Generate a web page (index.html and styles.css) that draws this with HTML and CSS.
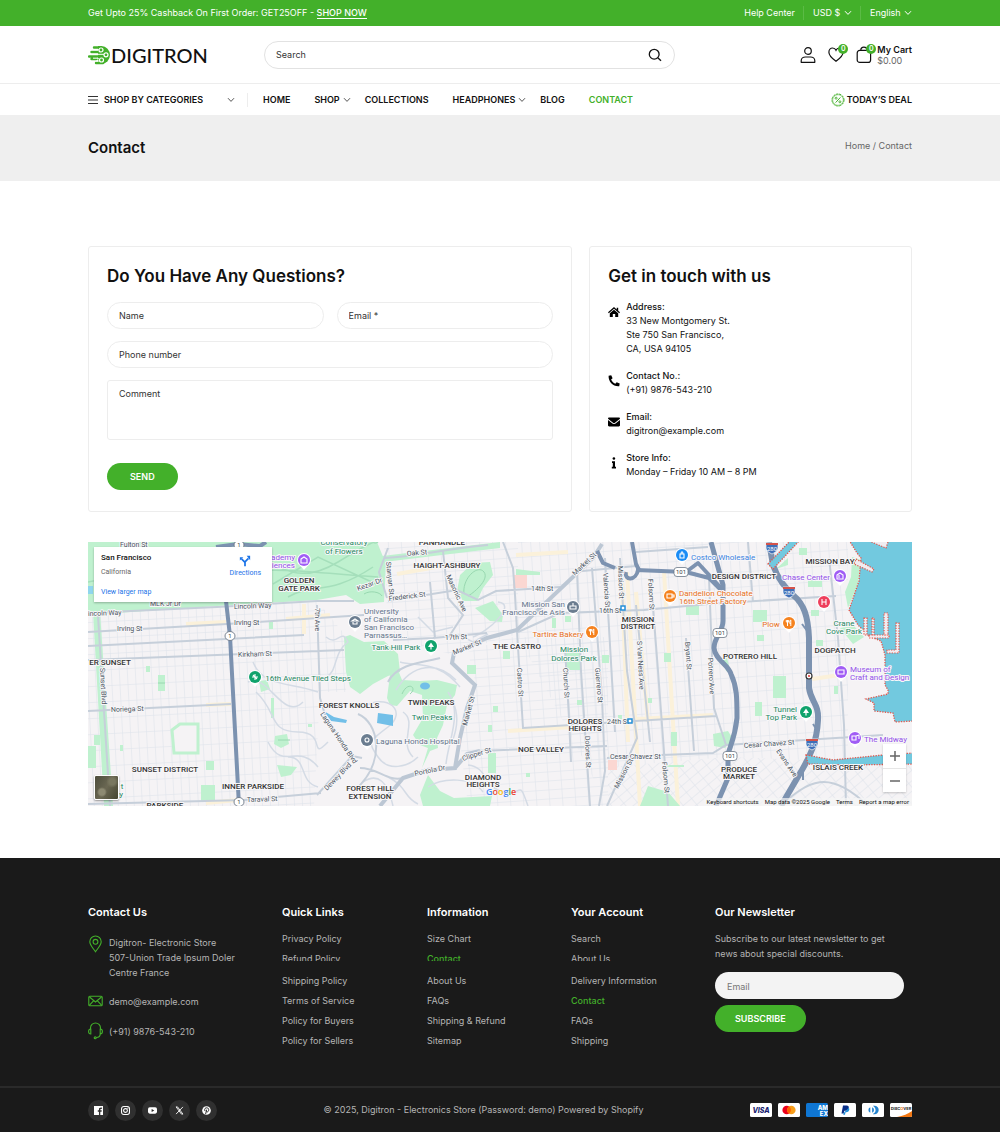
FILE: index.html
```html
<!DOCTYPE html>
<html lang="en">
<head>
<meta charset="utf-8">
<meta name="viewport" content="width=device-width, initial-scale=1">
<title>Contact – Digitron</title>
<link rel="stylesheet" href="styles.css">
</head>
<body>
<svg class="defs" aria-hidden="true">
  <symbol id="chevron" viewBox="0 0 8 6"><path d="M1 1.2 4 4.4 7 1.2" fill="none" stroke="currentColor" stroke-width="1"/></symbol>
</svg>

<div class="topbar">
  <div class="wrap topbar-row">
    <p class="promo">Get Upto 25% Cashback On First Order: GET25OFF - <a href="#shop">SHOP NOW</a></p>
    <div class="topbar-tools">
      <a href="#help">Help Center</a>
      <div class="picker"><select aria-label="Currency"><option>USD $</option></select><svg><use href="#chevron"/></svg></div>
      <div class="picker"><select aria-label="Language"><option>English</option></select><svg><use href="#chevron"/></svg></div>
    </div>
  </div>
</div>

<header class="header">
  <div class="wrap header-row">
    <a class="logo" href="#home" aria-label="Digitron">
      <svg viewBox="0 0 22 20" aria-hidden="true">
        <path d="M10 1h3.500a8.500 9 0 0 1 0 18H10z" fill="#43b02a"/>
        <path d="M6 2.500h7M3.500 7h7M1 11.500h9M3.500 14h5M8 18h7" stroke="#43b02a" stroke-width="2.400" stroke-linecap="round"/>
        <path d="M3 4.800h8M2 9.300h14M5 13.200h5l2 2M8 16h4" stroke="#fff" stroke-width="1" fill="none"/>
        <circle cx="13" cy="5" r="2" fill="#43b02a" stroke="#fff" stroke-width="1.200"/>
        <circle cx="18" cy="9.800" r="2" fill="#43b02a" stroke="#fff" stroke-width="1.200"/>
        <circle cx="13.500" cy="15" r="2" fill="#43b02a" stroke="#fff" stroke-width="1.200"/>
      </svg>
      <span>DIGITRON</span>
    </a>
    <form class="search" role="search">
      <input type="search" placeholder="Search" aria-label="Search">
      <button aria-label="Submit search"><svg viewBox="0 0 14 14"><circle cx="6.200" cy="6.200" r="4.900" fill="none" stroke="#111" stroke-width="1.300"/><path d="m9.800 9.800 3.200 3" stroke="#111" stroke-width="1.400"/></svg></button>
    </form>
    <div class="header-icons">
      <a href="#account" aria-label="Account"><svg viewBox="0 0 16 18"><g fill="none" stroke="#111" stroke-width="1.200"><circle cx="8" cy="5" r="3.300"/><path d="M1.200 16.300v-1.500c0-2.300 2-3.800 4.200-3.800h5.200c2.200 0 4.200 1.500 4.200 3.800v1.500z" stroke-linejoin="round"/></g></svg></a>
      <a href="#wishlist" aria-label="Wishlist"><svg viewBox="0 0 16 18"><path d="M8 15.200C4.500 12.700.9 9.500.9 6.200.9 3.800 2.600 2 4.600 2 6.200 2 7.400 2.900 8 4.300 8.600 2.900 9.800 2 11.400 2c2 0 3.700 1.800 3.700 4.200 0 3.300-3.600 6.500-7.100 9z" fill="none" stroke="#111" stroke-width="1.200"/></svg><span class="badge">0</span></a>
      <a class="cart" href="#cart"><svg viewBox="0 0 16 18"><g fill="none" stroke="#111" stroke-width="1.200"><rect x="1.200" y="4.400" width="13.400" height="12" rx="2.500"/><path d="M4.800 4.200C4.800 0 11 0 11 4.200"/></g></svg><span class="badge">0</span><span class="cart-text"><strong>My Cart</strong><small>$0.00</small></span></a>
    </div>
  </div>
</header>

<nav class="nav" aria-label="Main">
  <div class="wrap nav-row">
    <button class="categories"><svg class="burger" viewBox="0 0 10 8"><path d="M0 .5h10M0 4h10M0 7.500h10" stroke="#333" stroke-width="1"/></svg><span>SHOP BY CATEGORIES</span><svg class="chev"><use href="#chevron"/></svg></button>
    <ul class="menu">
      <li><a href="#home">HOME</a></li>
      <li><a href="#shop">SHOP <svg class="chev"><use href="#chevron"/></svg></a></li>
      <li><a href="#collections">COLLECTIONS</a></li>
      <li><a href="#headphones">HEADPHONES <svg class="chev"><use href="#chevron"/></svg></a></li>
      <li><a href="#blog">BLOG</a></li>
      <li><a class="active" href="#contact" aria-current="page">CONTACT</a></li>
    </ul>
    <a class="deal" href="#deal"><svg viewBox="0 0 14 14"><circle cx="7" cy="7" r="6" fill="none" stroke="#43b02a" stroke-width="1" stroke-dasharray="2.400 .74"/><circle cx="7" cy="7" r="5.300" fill="none" stroke="#43b02a" stroke-width=".5"/><path d="m4.600 9.600 4.800-5.200" stroke="#43b02a"/><g fill="none" stroke="#43b02a" stroke-width=".9"><circle cx="5.100" cy="5.200" r="1"/><circle cx="8.900" cy="8.800" r="1"/></g></svg>TODAY’S DEAL</a>
  </div>
</nav>

<main>
  <section class="banner">
    <div class="wrap banner-row">
      <h1>Contact</h1>
      <p class="crumbs"><a href="#home">Home</a> / Contact</p>
    </div>
  </section>

  <div class="wrap panels">
    <section class="card">
      <h2>Do You Have Any Questions?</h2>
      <form class="contact-form">
        <input class="field" type="text" placeholder="Name" aria-label="Name">
        <input class="field" type="email" placeholder="Email *" aria-label="Email">
        <input class="field wide" type="tel" placeholder="Phone number" aria-label="Phone number">
        <textarea class="field wide" placeholder="Comment" aria-label="Comment"></textarea>
        <button class="button send">SEND</button>
      </form>
    </section>
    <section class="card">
      <h2>Get in touch with us</h2>
      <ul class="details">
        <li><svg viewBox="0 0 12 12"><path d="M6 1 0 6.300l.8.900L6 2.700l5.200 4.500.8-.9-1.800-1.600V1.800H8.700v1.600z"/><path d="M6 3.700 1.800 7.300V11h3V8h2.400v3h3V7.300z"/></svg><div><h3>Address:</h3><p>33 New Montgomery St.<br>Ste 750 San Francisco,<br>CA, USA 94105</p></div></li>
        <li><svg viewBox="0 0 12 12"><path d="M.6.800 3.200.2l1.400 3-1.500 1.300c.8 1.800 2.200 3.300 4.200 4.300l1.400-1.600 3 1.300-.5 2.700C5.300 11.800.3 7 .6.800z"/></svg><div><h3>Contact No.:</h3><p>(+91) 9876-543-210</p></div></li>
        <li><svg viewBox="0 0 12 12"><path d="M1.200 1.600h9.600c.7 0 1.200.5 1.200 1.100L6.700 6.900a1.100 1.100 0 0 1-1.400 0L0 2.700c0-.6.500-1.100 1.200-1.100z"/><path d="M0 4v5.200c0 .7.500 1.200 1.200 1.200h9.600c.7 0 1.200-.5 1.200-1.200V4L7.200 7.700c-.7.500-1.700.5-2.400 0z"/></svg><div><h3>Email:</h3><p>digitron@example.com</p></div></li>
        <li><svg viewBox="0 0 12 12"><circle cx="5.900" cy="1.500" r="1.300"/><path d="M4 4.200h3v5.500h1V11.500H3.800V9.700h1V6H4z"/></svg><div><h3>Store Info:</h3><p>Monday – Friday 10 AM – 8 PM</p></div></li>
      </ul>
    </section>
  </div>

  <div class="wrap">
    <section class="map" aria-label="Map of San Francisco">
      <svg class="map-canvas" viewBox="0 0 824 264" preserveAspectRatio="xMidYMid slice">
        <defs>
          <pattern id="gridWest" width="8" height="16" patternUnits="userSpaceOnUse" patternTransform="rotate(-3)"><path d="M0 0V16M0 0H8" stroke="#dbe1ea" stroke-width="1"/></pattern>
          <pattern id="gridMid" width="13" height="9" patternUnits="userSpaceOnUse" patternTransform="rotate(-4)"><path d="M0 0V9M0 0H13" stroke="#dbe1ea" stroke-width="1"/></pattern>
          <pattern id="gridEast" width="9" height="15" patternUnits="userSpaceOnUse" patternTransform="rotate(-4)"><path d="M0 0V15M0 0H9" stroke="#dbe1ea" stroke-width="1"/></pattern>
          <pattern id="gridSouth" width="11" height="8" patternUnits="userSpaceOnUse" patternTransform="rotate(-40)"><path d="M0 0V8M0 0H11" stroke="#dbe1ea" stroke-width="1"/></pattern>
          <g id="pin"><path d="M-4 5.500 0 10l4-4.500z" fill="#fff"/><circle r="7" fill="#fff"/><circle r="6" fill="currentColor"/></g>
          <g id="tree"><path d="M0-3.500 3 1H.6V3.500H-.6V1H-3z" fill="#fff"/></g>
          <g id="fork"><path d="M-1.500-3V3M-2.700-3v2h2.400v-2M1.800 3V-3C.8-2.500.6-1 .8.500h1" fill="none" stroke="#fff"/></g>
          <g id="us"><rect x="-7" y="-4.500" width="14" height="9" rx="3" fill="#fff" stroke="#6b7786" stroke-width=".8"/><text class="shield" y="2">101</text></g>
          <g id="ca"><ellipse rx="5" ry="4.500" fill="#fff" stroke="#6b7786" stroke-width=".9"/><text class="shield" y="2">1</text></g>
          <g id="interstate"><path d="M-6-5H6V0C6 3 2 5 0 6-2 5-6 3-6 0z" fill="#3f6fb8" stroke="#fff" stroke-width=".7"/><path d="M-6-5H6v2H-6z" fill="#d4534b"/><text class="shield light" y="2.500">280</text></g>
        </defs>

        <rect width="824" height="264" fill="#f5f3f5"/>
        <path d="M0 70 230 60 258 94V150H232L226 264H0z" fill="url(#gridWest)"/>
        <path d="M296 0H430V92L362 112 300 96zM380 110 420 95H520V264H380L372 200 388 143z" fill="url(#gridMid)"/>
        <path d="M430 0H760V264H520L428 90z" fill="url(#gridEast)"/>
        <path d="M640 215 824 222V264H635zM520 225 640 215 630 264H520z" fill="#f5f3f5"/>
        <path d="M640 215 824 222V264H635zM520 225 640 215 630 264H520z" fill="url(#gridSouth)"/>

        <!-- shopping streets -->
        <path d="M98 82 138 80M198 77 242 73M216 62V92M118 163 143 162M309 32 354 24M420 189 500 184M548 177 625 173M428 13 480 10M539 30 552 264M548 50 560 180M534 40 540 200M724 137 752 133M118 261 150 258M576 30 590 264" stroke="#fbf1da" stroke-width="4" fill="none"/>

        <!-- parks -->
        <g fill="#bff1cf">
          <path d="M0 0H289L298 22 296 60 272 62 258 53 229 58 129 64 0 73z"/>
          <path d="M294 14 412 0V6L296 20zM5 70H12L25 264H16z"/>
          <path d="M256 95 262 93 276 100 296 99 310 112 312 130 300 134 285 142 272 152 262 145 258 130zM302 133 310 128 314 138 332 139 349 138 369 143 367 153 359 163 355 183 349 196 350 206 342 209 334 226 340 206 332 203 325 193 335 176 334 153 322 149 309 164 302 163 299 156z"/>
          <path d="M372 33 385 21 402 20 405 33 395 46 389 59 375 59 369 49zM387 66 405 59 415 73 414 80 402 79zM332 253 340 233 352 249 366 256 404 254 402 264H335z"/>
          <path d="M58 124h4v6h-4zM70 133h7v16h-7zM6 193h6v10H6zM0 204h8v22H0zM32 203h3v6h-3zM118 219h8v9h-8zM113 243h14v16h-14zM187 194l12-2 2 10-8 4-7-4zM189 223l20 2-6 8-10 2zM171 139l8-1 3 9-9 3zM181 79h4v8h-4zM183 156h3v20h-3zM220 182h4v3h-4z"/>
          <path d="M477 106h15v22h-15zM400 211h8v20h-8zM379 123h9v9h-9zM415 109h7v8h-7zM405 164h5v6h-5zM400 183h4v7h-4zM514 113h7v8h-7zM489 158h5v5h-5zM464 76h4v10h-4zM477 74h6v6h-6zM438 231h4v4h-4zM428 27l24 3v3h-24zM530 173h4v4h-4z"/>
          <path d="M665 68h14v12h-14zM685 134h13v22h-13zM598 63h13v10h-13zM669 93h7v6h-7zM635 117l4-1 4 15-5-2zM625 192l15-3 5 8-8 9-11-2zM583 190h6v14h-6zM576 111h7v9h-7zM552 264 560 244 580 250 592 264zM667 160h7v14h-7zM728 98h7v6h-7zM723 68h8v6h-8zM720 38h14v7h-14zM711 6h8v7h-8zM576 223h20v2h-20zM746 144h4v8h-4zM560 156h4v5h-4z"/>
          <path d="M764 15 773 18 770 42 760 66 757 50 763 35zM752 86 766 84 776 95 765 102zM688 27 700 16V23z"/>
        </g>
        <path d="M84 188 92 182H110V211H86z" fill="#f5f3f5" stroke="#bff1cf" stroke-width="3"/>
        <path d="M0 40C40 30 80 55 130 38S210 30 290 35M150 20C190 10 200 50 250 20S280 5 290 0M185 42 230 15 288 42M200 55C225 40 240 55 285 25" stroke="#a5dfbb" stroke-width="1.500" fill="none"/>
        <path d="M376 52C374 36 390 22 396 30S384 52 380 54M314 152C320 138 330 146 322 152M276 52c6-4 16-2 18 2M190 198h12M70 141h7" stroke="#98d8b0" fill="none"/>
        <path d="M425 33h14v13h-14zM520 218h9v10h-9z" fill="#fbd7d2"/>

        <!-- hillside streets -->
        <path d="M160 140C180 130 195 180 215 160M168 150C190 170 180 190 210 190S220 220 240 200M180 200c15 30 30 0 50 25M165 120C175 145 200 140 230 150M200 215c20 0 10 25 30 30M238 95c12 10 15-10 22 5-15 10-10 30-22 35M275 165C300 150 320 170 300 185S280 200 290 215 320 225 330 215M315 170C330 180 310 200 325 215M308 148C325 120 350 120 368 138M312 120C330 125 350 118 372 145M360 150C375 170 360 200 358 222M365 160C372 175 368 190 364 200M340 245C355 235 385 235 395 250M380 223C400 225 395 245 415 250S430 235 440 264M300 235C320 245 315 255 330 262M275 240C290 230 300 240 305 264M330 75 345 90 365 85M410 60C430 62 400 90 385 95M375 95 385 100 400 92" stroke="#d4dbe5" stroke-width="1.500" fill="none"/>

        <!-- main streets -->
        <g fill="none" stroke="#c6cfda" stroke-width="2">
          <path d="M0 71 129 65 229 59 266 59M0 90 139 82 276 73M0 104 216 93M0 118 256 108M0 169 143 162M0 262 156 258 233 251M229 63 232 156 238 176 264 214 229 253M264 214 274 216M10 74 22 264"/>
          <path d="M297 16C330 14 350 8 400 3M300 6 291 30 299 56M355 9 360 56 375 73 362 93M300 59 369 48 390 58 408 49 472 45M305 98 345 96 399 91M415 0 425 26 427 53 429 89 435 186 628 174M342 40 347 96M489 29 493 129 502 264M477 106 481 176 483 220M504 26 514 156 517 229 511 264M517 16 527 190M532 16 539 129 549 196 519 264M548 63 562 200M598 96 606 209M563 39 570 129 580 264M621 36 626 166 638 203M741 16 750 96 756 183 758 264M390 209 519 204M519 216 548 214 625 211 638 203 748 196 795 193"/>
          <path d="M430 90 472 71 556 68 620 62 748 54M484 30 548 24M265 250C300 220 290 180 270 172M272 226C290 226 300 240 315 236M693 263C720 240 740 225 780 264M660 0 665 60M548 10 620 5M300 140C310 120 340 120 352 116"/>
        </g>
        <g fill="none" stroke="#bcc7d4" stroke-width="4">
          <path d="M514 2 505 16 429 88 399 96 366 111 364 121 387 143 379 166 372 196 367 226 339 228 315 236 292 264M367 226 379 212 392 209"/>
        </g>

        <!-- freeways -->
        <g fill="none" stroke="#7c92b0" stroke-linejoin="round">
          <path d="M128 5 150 2 172 4 178 0" stroke-width="4"/>
          <path d="M138 59 142 94 151 264" stroke-width="4"/>
          <path d="M509 9 515 21 527 26M544 0 548 22 552 30M538 30c-2 9 10 9 12-2" stroke-width="4"/>
          <path d="M548 28 598 30 621 36 633 48M598 30 610 21 633 46" stroke-width="4"/>
          <path d="M623 0 635 43V79C635 90 626 95 626 106 627 118 640 122 643 132 649 145 649 156 649 176 647 195 643 202 640 212V236L628 264" stroke-width="5"/>
          <path d="M681 0 685 23C690 38 698 46 705 53 716 62 720 74 721 96V146C723 160 731 162 730 178 729 200 722 215 711 233L693 264" stroke-width="6"/>
          <path d="M714 82l6 8M725 182l4 6M715 228v10" stroke-width="2"/>
        </g>

        <!-- bay -->
        <g fill="#72c9df" stroke="#e2564b" stroke-width="1.300" stroke-dasharray="1.300 1.300">
          <path d="M761-2 769 11 773 16 771 39 761 68 770 83 781 94 793 99 797 113V143L800 148V152L778 157 786 161V169L805 171 807 180 826 179V-2z"/>
          <path d="M718 213 745 218 795 213 826 211V222L761 223 720 222z"/>
          <path d="M680 22 703-2H712L685 27z"/>
        </g>
        <g fill="#f0edf1" stroke="#e2564b" stroke-width="1.200" stroke-dasharray="1.300 1.300">
          <path d="M768 17 786 27 784 30 766 22zM781-1 798 6 800 0M796 71h4v22h-4zM776 76h3v17h-3zM784 76h2v17h-2zM781 93h20v3h-20zM808 81h3v30h-12v-3h9z"/>
        </g>
        <path d="M290 171l15 2v11l-16-3zM236 169 246 175 259 178 258 181 243 179z" fill="#72bfe8"/><ellipse cx="337" cy="144" rx="5" ry="3.500" fill="#72bfe8"/><path d="M0 44h5v8H0z" fill="#8fd6ee"/>

        <!-- road shields -->
        <use href="#ca" x="151" y="3"/><use href="#ca" x="142" y="94"/><use href="#ca" x="151" y="260"/>
        <use href="#us" x="593" y="30"/><use href="#us" x="632" y="91"/><use href="#us" x="642" y="214"/>
        <use href="#interstate" x="684" y="6"/><use href="#interstate" x="701" y="50"/><use href="#interstate" x="724" y="202"/>
        <circle cx="721" cy="134" r="3" fill="#fff" stroke="#333" stroke-width="1.200"/><circle cx="721" cy="134" r="1" fill="#d33"/>

        <!-- street names -->
        <g class="street">
          <text x="32" y="5">Fulton St</text><text x="62" y="64">MLK Jr Dr</text>
          <text x="0" y="74" transform="rotate(-2 0 74)">incoln Way</text><text x="146" y="67" transform="rotate(-2 146 67)">Lincoln Way</text>
          <text x="29" y="89">Irving St</text><text x="146" y="83">Irving St</text><text x="150" y="115" transform="rotate(-2 150 115)">Kirkham St</text>
          <text x="23" y="170" transform="rotate(-2 23 170)">Noriega St</text><text x="159" y="260" transform="rotate(-2 159 260)">Taraval St</text>
          <text transform="translate(12 126) rotate(87)">Sunset Blvd</text><text transform="translate(227 66) rotate(90)">7th Ave</text>
          <text transform="translate(232 172) rotate(56)">Laguna Honda Blvd</text><text transform="translate(239 249) rotate(-46)">Dewey Blvd</text>
          <text transform="translate(270 49) rotate(-20)">Kezar Dr</text><text transform="translate(298 20) rotate(84)">Stanyan St</text>
          <text transform="translate(319 14) rotate(-5)">Oak St</text><text transform="translate(301 59) rotate(-7)">Frederick St</text>
          <text transform="translate(358 34) rotate(65)">Masonic Ave</text><text x="357" y="98" transform="rotate(-3 357 98)">17th St</text>
          <text transform="translate(366 113) rotate(-22)">Market St</text><text transform="translate(379 184) rotate(-75)">Market St</text><text transform="translate(487 34) rotate(-44)">Market St</text>
          <text x="443" y="49">14th St</text><text x="511" y="71">16th St</text>
          <text transform="translate(515 31) rotate(86)">Valencia St</text><text transform="translate(530 24) rotate(88)">Mission St</text>
          <text transform="translate(429 126) rotate(87)">Castro St</text><text transform="translate(475 126) rotate(87)">Church St</text><text transform="translate(507 126) rotate(85)">Guerrero St</text>
          <text transform="translate(497 194) rotate(88)">Dolores St</text><text x="519" y="182">24th St</text><text x="522" y="217">Cesar Chavez St</text>
          <text transform="translate(375 219) rotate(-18)">Clipper St</text><text transform="translate(327 234) rotate(-12)">Portola Dr</text>
          <text transform="translate(530 247) rotate(-62)">Mission St</text><text transform="translate(549 99) rotate(87)">S Van Ness Ave</text>
          <text transform="translate(560 37) rotate(87)">Folsom St</text><text transform="translate(574 220) rotate(85)">Folsom St</text>
          <text transform="translate(597 100) rotate(86)">Bryant St</text><text transform="translate(620 116) rotate(87)">Potrero Ave</text>
          <text x="656" y="206" transform="rotate(-4 656 206)">Cesar Chavez St</text><text transform="translate(688 209) rotate(56)">Evans Ave</text>
        </g>

        <!-- districts -->
        <g class="area">
          <text x="211" y="41">GOLDEN</text><text x="211" y="49">GATE PARK</text><text x="22" y="123">ER SUNSET</text><text x="77" y="230">SUNSET DISTRICT</text><text x="165" y="247">INNER PARKSIDE</text><text x="77" y="266">PARKSIDE</text>
          <text x="261" y="166">FOREST KNOLLS</text><text x="282" y="249">FOREST HILL</text><text x="282" y="257">EXTENSION</text><text x="354" y="3">PANHANDLE</text><text x="359" y="26">HAIGHT-ASHBURY</text>
          <text x="429" y="107">THE CASTRO</text><text x="343" y="163">TWIN PEAKS</text><text x="497" y="182">DOLORES</text><text x="497" y="189">HEIGHTS</text><text x="453" y="210">NOE VALLEY</text><text x="395" y="238">DIAMOND</text><text x="395" y="245">HEIGHTS</text>
          <text x="550" y="80">MISSION</text><text x="550" y="87">DISTRICT</text><text x="656" y="37">DESIGN DISTRICT</text><text x="742" y="22">MISSION BAY</text><text x="747" y="111">DOGPATCH</text><text x="662" y="117">POTRERO HILL</text>
          <text x="651" y="230">PRODUCE</text><text x="651" y="237">MARKET</text><text x="750" y="228">ISLAIS CREEK</text>
        </g>

        <!-- places -->
        <g class="place green"><text x="256" y="3">Conservatory</text><text x="256" y="12">of Flowers</text><text x="34" y="247">t</text><text x="31" y="255">ay</text><text x="220" y="139">16th Avenue Tiled Steps</text><text x="308" y="108">Tank Hill Park</text><text x="344" y="178">Twin Peaks</text><text x="486" y="110">Mission</text><text x="486" y="119">Dolores Park</text><text x="756" y="84">Crane</text><text x="756" y="92">Cove Park</text><text class="end" x="709" y="170">Tunnel</text><text class="end" x="709" y="178">Top Park</text></g>
        <g class="place violet"><text class="end" x="207" y="18">Academy</text><text class="end" x="207" y="26">Sciences</text><text x="718" y="38">Chase Center</text><text class="start" x="762" y="130">Museum of</text><text class="start" x="762" y="138">Craft and Design</text><text class="start" x="776" y="200">The Midway</text></g>
        <g class="place slate"><text class="start" x="276" y="72">University</text><text class="start" x="276" y="80">of California</text><text class="start" x="276" y="88">San Francisco</text><text class="start" x="276" y="96">Parnassus…</text><text class="end" x="477" y="65">Mission San</text><text class="end" x="477" y="73">Francisco de Asis</text><text class="start" x="288" y="202">Laguna Honda Hospital</text></g>
        <g class="place orange"><text x="470" y="95">Tartine Bakery</text><text class="start" x="591" y="54">Dandelion Chocolate</text><text class="start" x="591" y="62">16th Street Factory</text><text x="683" y="85">Plow</text></g>
        <g class="place blue"><text class="start" x="603" y="18">Costco Wholesale</text></g>

        <g color="#a05cf5"><use href="#pin" x="216" y="18"/><use href="#pin" x="752" y="34"/><use href="#pin" x="753" y="130"/><use href="#pin" x="767" y="196"/></g>
        <g color="#6b7d90"><use href="#pin" x="267" y="80"/><use href="#pin" x="485" y="65"/><use href="#pin" x="279" y="198"/></g>
        <g color="#10a36c"><use href="#pin" x="167" y="135"/><use href="#pin" x="343" y="104"/><use href="#pin" x="718" y="170"/></g>
        <g color="#f5821f"><use href="#pin" x="504" y="90"/><use href="#pin" x="582" y="54"/><use href="#pin" x="701" y="81"/></g>
        <use href="#pin" x="594" y="13" color="#1a8cf5"/><use href="#pin" x="736" y="60" color="#ee3f5c"/>
        <use href="#tree" x="343" y="104"/><use href="#tree" x="718" y="170"/><use href="#fork" x="504" y="90"/><use href="#fork" x="701" y="81"/>
        <g fill="none" stroke="#fff" stroke-width="1.100"><path d="M213 17l3-2 3 2v4h-6zM749 33l3-2 3 2v4h-6zM751 33v3M750 128h6v4h-6zM764 194h4v4h-4zM768 194l3-1v4M264 79h6l-3-2zM265 80v2h4v-2M482 67v-3h6v3zM485 64v-3M164 135h6M167 132v6M165 133l4 4M579 52h5v4h-5zM584 53h2v2h-2M592 12h4v4h-4zM593 12c0-3 2-3 2 0M734 57v6M738 57v6M734 60h4"/><circle cx="279" cy="198" r="2"/></g>
        <g fill="#fff" stroke="#2590d8" stroke-width="1.500"><path d="M533 64h4v4h-4zM540 177h4v4h-4z"/></g>
      </svg>

      <div class="place-card">
        <div class="place-name"><strong>San Francisco</strong><span>California</span></div>
        <a class="directions" href="#directions"><svg viewBox="0 0 14 14" aria-hidden="true"><path d="M7 13V8.500L3 4.500M7 9V8l4-4" fill="none" stroke="#1a73e8" stroke-width="2"/><path d="M9 1h4v5zM1 2.500h4l-4 4z" fill="#1a73e8"/></svg>Directions</a>
        <a class="larger" href="#map">View larger map</a>
      </div>
      <button class="satellite" aria-label="Show satellite imagery"></button>
      <div class="google" aria-label="Google"><span class="g-blue">G</span><span class="g-red">o</span><span class="g-yellow">o</span><span class="g-blue">g</span><span class="g-green">l</span><span class="g-red">e</span></div>
      <div class="zoom">
        <button aria-label="Zoom in"><svg viewBox="0 0 10 10"><path d="M0 5h10M5 0v10" stroke="#666" stroke-width="1.500"/></svg></button>
        <button aria-label="Zoom out"><svg viewBox="0 0 10 10"><path d="M0 5h10" stroke="#666" stroke-width="1.500"/></svg></button>
      </div>
      <div class="credits"><a href="#keys">Keyboard shortcuts</a><span>Map data ©2025 Google</span><a href="#terms">Terms</a><a href="#report">Report a map error</a></div>
    </section>
  </div>
</main>

<footer class="footer">
  <div class="wrap footer-grid">
    <section>
      <h2>Contact Us</h2>
      <ul class="reach">
        <li><svg viewBox="0 0 15 18"><g fill="none" stroke="#43b02a" stroke-width="1.100"><path d="M7.500 16.800C4.500 12.500 1.800 9.800 1.800 6.800a5.700 5.800 0 0 1 11.400 0c0 3-2.700 5.700-5.700 10z"/><circle cx="7.500" cy="6.800" r="2.400"/></g></svg><span>Digitron- Electronic Store<br>507-Union Trade Ipsum Doler<br>Centre France</span></li>
        <li><svg viewBox="0 0 15 18"><g fill="none" stroke="#43b02a" stroke-width="1.100"><rect x=".8" y="4.300" width="13.400" height="9.400" rx="1"/><path d="m1.500 5 6 5 6-5M1.500 13.200 5.500 8.800M13.500 13.200 9.500 8.800"/></g></svg><a href="mailto:demo@example.com">demo@example.com</a></li>
        <li><svg viewBox="0 0 15 18"><g fill="none" stroke="#43b02a" stroke-width="1.100"><path d="M2.500 7V6a5 5 0 0 1 10 0v1M2.800 7v5c-1.300 0-2.200-1-2.200-2.500S1.500 7 2.800 7zM12.200 7v5c1.300 0 2.200-1 2.200-2.500S13.500 7 12.200 7zM12.200 12c0 2.500-1.500 3.500-4 3.500"/><circle cx="7.200" cy="15.700" r="1"/></g></svg><a href="tel:+919876543210">(+91) 9876-543-210</a></li>
      </ul>
    </section>
    <section>
      <h2>Quick Links</h2>
      <ul class="links"><li><a href="#privacy">Privacy Policy</a></li><li><a href="#refund">Refund Policy</a></li><li><a href="#shipping-policy">Shipping Policy</a></li><li><a href="#tos">Terms of Service</a></li><li><a href="#buyers">Policy for Buyers</a></li><li><a href="#sellers">Policy for Sellers</a></li></ul>
    </section>
    <section>
      <h2>Information</h2>
      <ul class="links"><li><a href="#size">Size Chart</a></li><li><a class="active" href="#contact">Contact</a></li><li><a href="#about">About Us</a></li><li><a href="#faqs">FAQs</a></li><li><a href="#shipping-refund">Shipping &amp; Refund</a></li><li><a href="#sitemap">Sitemap</a></li></ul>
    </section>
    <section>
      <h2>Your Account</h2>
      <ul class="links"><li><a href="#search">Search</a></li><li><a href="#about">About Us</a></li><li><a href="#delivery">Delivery Information</a></li><li><a class="active" href="#contact">Contact</a></li><li><a href="#faqs">FAQs</a></li><li><a href="#shipping">Shipping</a></li></ul>
    </section>
    <section>
      <h2>Our Newsletter</h2>
      <p class="pitch">Subscribe to our latest newsletter to get news about special discounts.</p>
      <form class="subscribe">
        <input type="email" placeholder="Email" aria-label="Newsletter email">
        <button class="button">SUBSCRIBE</button>
      </form>
    </section>
  </div>
  <div class="footer-bottom">
    <div class="wrap bottom-row">
      <div class="social">
        <a href="#facebook" aria-label="Facebook"><svg viewBox="0 0 10 10"><path d="M0 0h10v10H7V6.300h1.400l.2-1.500H7V4c0-.5.200-.8.800-.8h.9V1.800C6.500 1.500 5.500 2.300 5.500 3.800v1H4.200v1.500h1.300V10H0z" fill="#fff"/></svg></a>
        <a href="#instagram" aria-label="Instagram"><svg viewBox="0 0 10 10"><g fill="none" stroke="#fff" stroke-width="1.200"><rect x=".6" y=".6" width="8.800" height="8.800" rx="2.500"/><circle cx="5" cy="5" r="2.100"/></g><circle cx="7.600" cy="2.400" r=".6" fill="#fff"/></svg></a>
        <a href="#youtube" aria-label="YouTube"><svg viewBox="0 0 10 10"><rect x="0" y="1.500" width="10" height="7" rx="2" fill="#fff"/><path d="m4 3.300 3 1.700-3 1.700z" fill="#2a2a2a"/></svg></a>
        <a href="#x" aria-label="X"><svg viewBox="0 0 10 10"><path d="M1.200 1h1.600l6 8H7.200z" fill="none" stroke="#fff"/><path d="M8.800 1 1.200 9" stroke="#fff"/></svg></a>
        <a href="#pinterest" aria-label="Pinterest"><svg viewBox="0 0 10 10"><circle cx="5" cy="5" r="4.800" fill="#fff"/><path d="M4 9 5.200 4M3.300 5.600C2.200 3 4 1.900 5.300 2c2 .1 2.500 1.700 2 3.200-.4 1.400-2 1.900-2.500.8" fill="none" stroke="#2a2a2a" stroke-width="1.100"/></svg></a>
      </div>
      <p class="copyright">© 2025, Digitron - Electronics Store (Password: demo) Powered by Shopify</p>
      <ul class="payments">
        <li><svg viewBox="0 0 22 14" role="img" aria-label="Visa"><rect width="22" height="14" rx="1.500" fill="#fff"/><text x="11" y="9.600" class="visa">VISA</text></svg></li>
        <li><svg viewBox="0 0 22 14" role="img" aria-label="Mastercard"><rect width="22" height="14" rx="1.500" fill="#fff"/><circle cx="8.700" cy="7" r="4.300" fill="#eb001b"/><circle cx="13.300" cy="7" r="4.300" fill="#f79e1b"/><path d="M11 3.400a4.300 4.300 0 0 1 0 7.200 4.300 4.300 0 0 1 0-7.200z" fill="#ff5f00"/></svg></li>
        <li><svg viewBox="0 0 22 14" role="img" aria-label="American Express"><rect width="22" height="14" rx="1.500" fill="#0f76d3"/><text x="22" y="7" class="amex">AM</text><text x="22" y="12.500" class="amex">EX</text></svg></li>
        <li><svg viewBox="0 0 22 14" role="img" aria-label="PayPal"><rect width="22" height="14" rx="1.500" fill="#fff"/><path d="M9 2.500h3.500c2 0 2.600 1.200 2.200 2.800-.4 1.800-1.700 2.500-3.400 2.500h-1l-.6 2.700H7.500z" fill="#0a2f87"/><path d="M14.700 4.800c.6.600.7 1.300.5 2.200-.4 1.600-1.600 2.200-3.100 2.200h-.6l-.5 2.500H9.200l.5-1.700" fill="#1d8fd8"/></svg></li>
        <li><svg viewBox="0 0 22 14" role="img" aria-label="Diners Club"><rect width="22" height="14" rx="1.500" fill="#fff"/><path d="M11 2.800h1.500a4.200 4.200 0 0 1 0 8.400H11z" fill="#2484cf"/><circle cx="9.200" cy="7" r="4.400" fill="#fff"/><path d="M8.300 4.200v5.600A3 3 0 0 1 8.300 4.200zM10.100 4.200v5.600a3 3 0 0 0 0-5.600z" fill="#2484cf"/></svg></li>
        <li><svg viewBox="0 0 22 14" role="img" aria-label="Discover"><rect width="22" height="14" rx="1.500" fill="#fff"/><path d="M22 8v4.500A1.500 1.500 0 0 1 20.500 14H7C13 13 18 11 22 8z" fill="#f27712"/><text x="11" y="7.200" class="disc">DISC<tspan fill="#f27712">O</tspan>VER</text></svg></li>
      </ul>
    </div>
  </div>
</footer>
</body>
</html>
```
FILE: styles.css
```css
:root {
  --green: #43b02a;
  --ink: #111;
  --line: #ededed;
}

* { box-sizing: border-box; }

body {
  margin: 0;
  background: #fff;
  color: var(--ink);
  font: 400 9px/14px Inter, "Liberation Sans", sans-serif;
}

h1, h2, h3, p, ul { margin: 0; padding: 0; }
ul { list-style: none; }
a { color: inherit; text-decoration: none; }
svg { display: block; flex: none; }
input, textarea, select, button { font: inherit; color: inherit; margin: 0; }
button { border: 0; padding: 0; background: none; cursor: pointer; }
.defs { position: absolute; width: 0; height: 0; }

.wrap { padding: 0 88px; }

/* Top bar */
.topbar { background: var(--green); color: #fff; }
.topbar-row { display: flex; justify-content: space-between; align-items: center; min-height: 26px; }
.promo a { border-bottom: 1px solid #fff; font-weight: 500; }
.topbar-tools { display: flex; align-items: center; gap: 8px; }
.picker { display: flex; align-items: center; gap: 3px; padding-left: 9px; border-left: 1px solid #5bbb45; }
.picker select { appearance: none; border: 0; padding: 0; background: none; }
.picker svg { width: 8px; height: 6px; }
.picker option { color: var(--ink); }

/* Header */
.header { border-bottom: 1px solid var(--line); }
.header-row { display: flex; align-items: center; min-height: 57px; }
.logo { display: flex; align-items: center; gap: 1px; width: 176px; font: 500 20px/24px Lato, sans-serif; }
.logo svg { width: 22px; height: 20px; }
.search { flex: 0 1 411px; display: flex; align-items: center; height: 28px; padding: 0 12px 0 11px; border: 1px solid #e2e2e2; border-radius: 14px; }
.search input { flex: 1; min-width: 0; border: 0; padding: 0; outline: 0; background: none; }
.search svg { width: 14px; height: 14px; }
.header-icons { display: flex; align-items: center; gap: 12px; margin-left: auto; }
.header-icons a { position: relative; display: flex; align-items: center; }
.header-icons svg { width: 16px; height: 18px; }
.badge { position: absolute; left: 10px; top: -2px; width: 10px; height: 10px; border-radius: 5px; background: var(--green); color: #fff; font-size: 7px; font-weight: 600; line-height: 10px; text-align: center; }
.header-icons .cart { gap: 5px; }
.cart .badge { top: 0; }
.cart-text { display: grid; line-height: 11px; }
.cart-text strong { font-weight: 600; }
.cart-text small { font-size: 9px; color: #666; }

/* Navigation */
.nav { font-weight: 600; }
.nav-row { display: flex; align-items: center; min-height: 31px; }
.chev { width: 8px; height: 6px; color: #555; }
.categories { display: flex; align-items: center; gap: 6px; width: 160px; padding-right: 12px; border-right: 1px solid var(--line); font-weight: 600; }
.categories .chev { margin-left: auto; }
.burger { width: 10px; height: 8px; }
.menu { display: flex; gap: 24px; margin-left: 15px; }
.menu a { display: flex; align-items: center; gap: 3px; }
.menu .chev { margin-right: -10px; }
.active { color: var(--green); }
.deal { display: flex; align-items: center; gap: 2px; margin-left: auto; }
.deal svg { width: 14px; height: 14px; }

/* Page banner */
.banner { background: #efefef; }
.banner-row { display: flex; align-items: center; justify-content: space-between; min-height: 66px; }
h1 { font-size: 15px; line-height: 20px; font-weight: 600; }
.crumbs { padding-bottom: 4px; color: #666; }

/* Contact panels */
.panels { display: grid; grid-template-columns: 3fr 2fr; gap: 17px; margin: 65px 0 30px; }
.card { padding: 18px; border: 1px solid var(--line); border-radius: 3px; }
.card h2 { font-size: 17px; line-height: 22px; font-weight: 600; margin-bottom: 15px; }
.contact-form { display: grid; grid-template-columns: 1fr 1fr; gap: 12px 13px; }
.field { width: 100%; height: 27px; padding: 0 11px; border: 1px solid var(--line); border-radius: 14px; background: #fff; outline: 0; }
.wide { grid-column: 1 / -1; }
textarea.field { height: 60px; padding: 6px 11px; border-radius: 3px; resize: none; display: block; }
::placeholder { color: #333; opacity: 1; }
.button { height: 27px; padding: 0 23px; border-radius: 14px; background: var(--green); color: #fff; font-weight: 600; }
.send { justify-self: start; margin: 11px 0 3px; }
.details { display: grid; gap: 13px; }
.card .details { margin-top: -2px; }
.details li { display: flex; gap: 6px; }
.details svg { width: 12px; height: 12px; margin-top: 6px; }
.details h3 { font-size: 9px; font-weight: 500; }

/* Map */
.map { position: relative; height: 264px; overflow: hidden; font-family: Roboto, sans-serif; }
.map-canvas { width: 100%; height: 100%; }
.map-canvas text { paint-order: stroke; stroke: #f8f7f9; stroke-width: 2px; stroke-linejoin: round; }
.street { font-size: 7px; fill: #4a5460; }
.area { font-size: 8px; font-weight: 500; fill: #333; text-anchor: middle; }
.place { font-size: 8px; text-anchor: middle; }
.green { fill: #23875f; }
.violet { fill: #9350e8; }
.slate { fill: #64748b; }
.orange { fill: #e8701a; }
.blue { fill: #3a83e0; }
.start { text-anchor: start; }
.end { text-anchor: end; }
.map-canvas .shield { font-size: 6px; fill: #444; text-anchor: middle; stroke: none; }
.map-canvas .light { fill: #fff; }

.place-card { position: absolute; left: 6px; top: 5px; width: 178px; height: 55px; padding: 6px 7px 5px; display: grid; grid-template-columns: 1fr auto; align-content: space-between; background: #fff; box-shadow: 0 1px 2px #0004; font-size: 7px; line-height: 10px; }
.place-name { display: grid; gap: 2px; color: #666; }
.place-name strong { font-size: 8px; font-weight: 500; color: #111; }
.directions { display: grid; justify-items: center; gap: 1px; padding: 2px 4px 0 0; }
.directions svg { width: 12px; height: 12px; }
.directions, .larger { color: #1a73e8; }
.satellite { position: absolute; left: 6px; bottom: 6px; width: 25px; height: 25px; border: 1px solid #fff; border-radius: 2px; background: radial-gradient(circle at 30% 70%, #8d8a72 0 3px, transparent 5px), radial-gradient(circle at 75% 25%, #79775f 0 3px, transparent 6px), linear-gradient(120deg, #4c4d3c, #6b6853 50%, #45452f); box-shadow: 0 1px 2px #0006; }
.google { position: absolute; left: 398px; bottom: 8px; font: 600 9px/12px "Open Sans", sans-serif; text-shadow: 0 0 2px #fff; }
.g-blue { color: #4285f4; }
.g-red { color: #ea4335; }
.g-yellow { color: #fbbc05; }
.g-green { color: #34a853; }
.zoom { position: absolute; right: 6px; bottom: 14px; width: 23px; background: #fff; box-shadow: 0 1px 2px #0003; }
.zoom button { display: grid; place-items: center; width: 100%; height: 24px; }
.zoom button + button { border-top: 1px solid #e6e6e6; }
.zoom svg { width: 10px; height: 10px; }
.credits { position: absolute; right: 0; bottom: 0; display: flex; gap: 6px; padding: 0 3px; background: #f5f5f5b3; color: #111; font-size: 6px; line-height: 8px; }

/* Footer */
.footer { margin-top: 52px; background: #1a1a1a; color: #b5b5b5; }
.footer-grid { display: grid; grid-template-columns: 194fr 145fr 144fr 144fr 197fr; padding-top: 46px; padding-bottom: 38px; }
.footer h2 { font-size: 11px; line-height: 16px; font-weight: 600; color: #fff; }
.reach { display: grid; gap: 12px; margin-top: 15px; line-height: 15px; }
.reach li { display: flex; align-items: center; gap: 6px; }
.reach li:first-child { align-items: flex-start; }
.reach svg { width: 15px; height: 18px; }
.links { display: grid; gap: 6px; margin-top: 12px; }
.links li:nth-child(2) a { display: block; height: 9px; margin-bottom: 7px; overflow: hidden; }
.footer .active { color: var(--green); font-weight: 500; }
.pitch { margin: 11px 8px 0 0; line-height: 15px; }
.subscribe { display: grid; justify-items: start; gap: 6px; margin: 11px 8px 0 0; }
.subscribe input { width: 100%; height: 27px; padding: 1px 12px 0; border: 0; border-radius: 14px; background: #f3f3f3; color: var(--ink); }
.subscribe ::placeholder { color: #777; }
.subscribe .button { padding: 0 20px; }
.footer-bottom { border-top: 2px solid #2a2a2a; }
.bottom-row { display: flex; align-items: center; justify-content: space-between; min-height: 44px; }
.social { display: flex; gap: 6px; }
.social a { display: grid; place-items: center; width: 21px; height: 21px; border-radius: 50%; background: #303030; }
.social svg { width: 9px; height: 9px; }
.payments { display: flex; gap: 6px; }
.payments svg { width: 22px; height: 14px; }
.visa { font: italic 800 7px Inter, sans-serif; fill: #1a1f71; text-anchor: middle; }
.amex { font: 800 6px Inter, sans-serif; fill: #fff; text-anchor: end; }
.disc { font: 700 4px Inter, sans-serif; fill: #222; text-anchor: middle; }
```
